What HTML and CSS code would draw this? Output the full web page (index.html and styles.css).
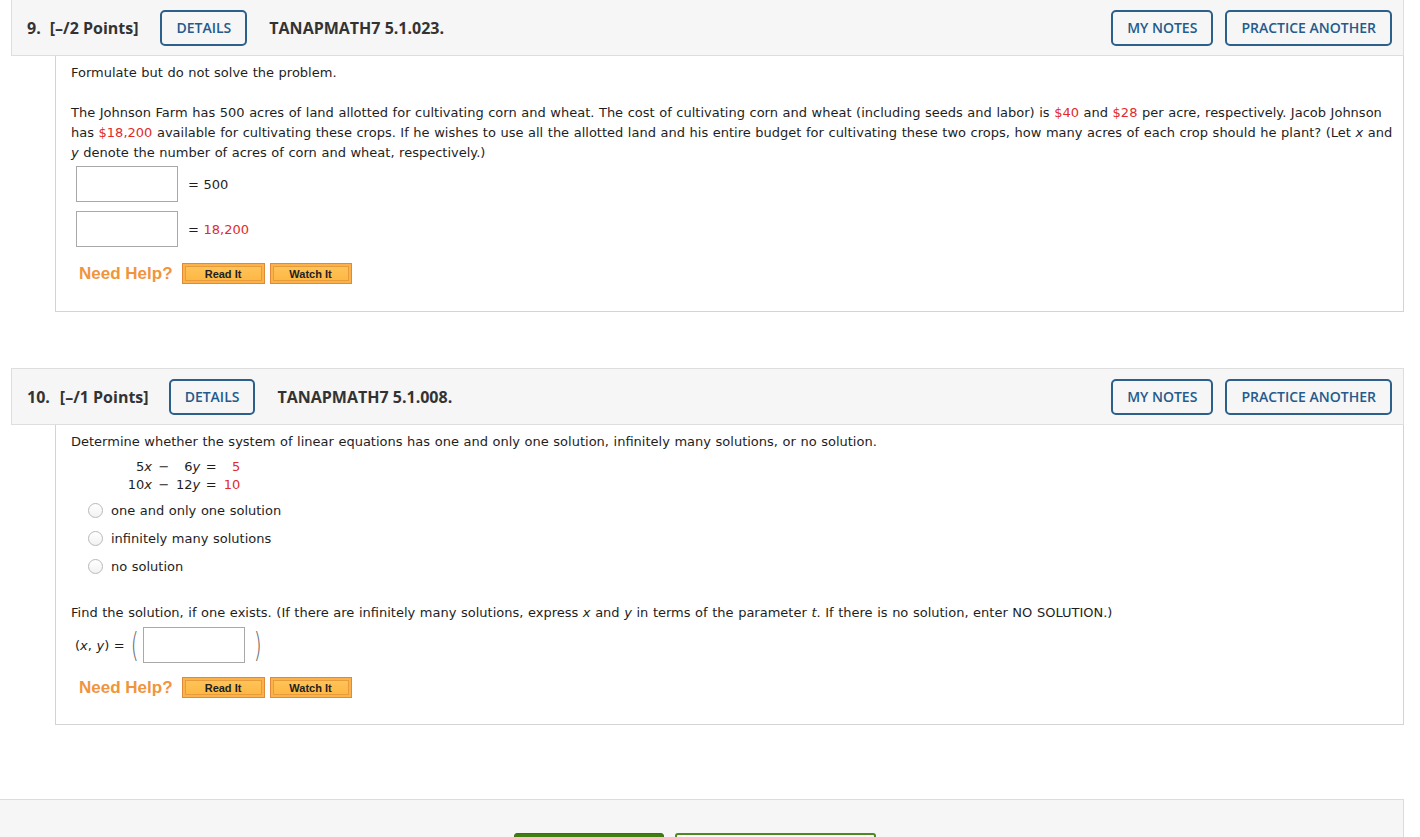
FILE: index.html
```html
<!DOCTYPE html>
<html>
<head>
<meta charset="utf-8">
<link rel="stylesheet" href="styles.css">
</head>
<body>
<div class="page">
  <div class="question q9">
    <div class="qhead">
      <span class="qnum">9.</span>
      <span class="qpts">[–/2 Points]</span>
      <span class="btn">DETAILS</span>
      <span class="qcode">TANAPMATH7 5.1.023.</span>
      <span class="spacer"></span>
      <span class="btn">MY NOTES</span>
      <span class="btn">PRACTICE ANOTHER</span>
    </div>
    <div class="qbody body9">
      <p class="line">Formulate but do not solve the problem.</p>
      <p class="para">The Johnson Farm has 500 acres of land allotted for cultivating corn and wheat. The cost of cultivating corn and wheat (including seeds and labor) is <span class="red">$40</span> and <span class="red">$28</span> per acre, respectively. Jacob Johnson has <span class="red">$18,200</span> available for cultivating these crops. If he wishes to use all the allotted land and his entire budget for cultivating these two crops, how many acres of each crop should he plant? (Let <i>x</i> and <i>y</i> denote the number of acres of corn and wheat, respectively.)</p>
      <div class="eqrow first"><span class="box"></span><span class="eqtxt">= 500</span></div>
      <div class="eqrow"><span class="box"></span><span class="eqtxt">= <span class="red">18,200</span></span></div>
      <div class="help">
        <span class="needhelp">Need Help?</span>
        <span class="hbtn">Read It</span>
        <span class="hbtn">Watch It</span>
      </div>
    </div>
  </div>

  <div class="question q10">
    <div class="qhead">
      <span class="qnum">10.</span>
      <span class="qpts">[–/1 Points]</span>
      <span class="btn">DETAILS</span>
      <span class="qcode">TANAPMATH7 5.1.008.</span>
      <span class="spacer"></span>
      <span class="btn">MY NOTES</span>
      <span class="btn">PRACTICE ANOTHER</span>
    </div>
    <div class="qbody body10">
      <p class="line">Determine whether the system of linear equations has one and only one solution, infinitely many solutions, or no solution.</p>
      <table class="sys">
        <tr><td class="r">5<i>x</i></td><td class="op">−</td><td class="r">6<i>y</i></td><td class="op">=</td><td class="r red">5</td></tr>
        <tr><td class="r">10<i>x</i></td><td class="op">−</td><td class="r">12<i>y</i></td><td class="op">=</td><td class="r red">10</td></tr>
      </table>
      <div class="opts">
        <div class="opt"><span class="radio"></span><span>one and only one solution</span></div>
        <div class="opt"><span class="radio"></span><span>infinitely many solutions</span></div>
        <div class="opt"><span class="radio"></span><span>no solution</span></div>
      </div>
      <p class="line find">Find the solution, if one exists. (If there are infinitely many solutions, express <i>x</i> and <i>y</i> in terms of the parameter <i>t</i>. If there is no solution, enter NO SOLUTION.)</p>
      <div class="xyrow">
        <span class="xy">(<i>x</i>, <i>y</i>) =</span>
        <span class="paren">(</span>
        <span class="box"></span>
        <span class="paren">)</span>
      </div>
      <div class="help help2">
        <span class="needhelp">Need Help?</span>
        <span class="hbtn">Read It</span>
        <span class="hbtn">Watch It</span>
      </div>
    </div>
  </div>

  <div class="footer">
    <span class="gbtn solid"></span>
    <span class="gbtn outline"></span>
  </div>
</div>
</body>
</html>
```
FILE: styles.css
```css
* { box-sizing: border-box; }
html, body { margin: 0; padding: 0; background: #fff; }
body {
  width: 1420px;
  height: 837px;
  overflow: hidden;
  font-family: "DejaVu Sans", Verdana, sans-serif;
  font-size: 13px;
  word-spacing: 0.45px;
  color: #1e1e1e;
}
.question { margin-left: 11px; width: 1393px; }
.q9 { margin-top: -1px; }
.q10 { margin-top: 56px; }
.qhead {
  height: 57px;
  background: #f6f6f6;
  border: 1px solid #dedede;
  display: flex;
  align-items: center;
  padding: 0 11px 0 15px;
  font-family: "Open Sans", sans-serif;
  word-spacing: 0;
  color: #333;
}
.qnum { font-size: 16px; font-weight: 700; margin-right: 9px; }
.q10 .qnum { margin-right: 10px; }
.qpts { font-size: 16px; font-weight: 700; margin-right: 22px; }
.q10 .qpts { margin-right: 20px; }
.qcode { font-size: 16px; font-weight: 700; margin-left: 22px; }
.spacer { flex: 1; }
.btn {
  height: 36px;
  border: 2px solid #2d5f8b;
  border-radius: 5px;
  color: #245a8c;
  font-size: 14px;
  font-weight: 600;
  display: flex;
  align-items: center;
  padding: 0 14px;
  margin-left: 12px;
}
.qhead .btn:nth-child(3) { margin-left: 0; }
.qbody {
  margin-left: 44px;
  border: 1px solid #d4d4d4;
  border-top: none;
  background: #fff;
  padding: 7px 10px 0 15px;
}
.body9 { height: 256px; }
.body10 { height: 300px; }
p { margin: 0; }
.line { line-height: 20px; }
.para { margin-top: 20px; line-height: 20px; }
.red { color: #e02b2b; }
.eqrow { display: flex; align-items: center; margin-left: 5px; margin-top: 9px; }
.eqrow.first { margin-top: 3px; }
.box {
  display: inline-block;
  width: 102px;
  height: 36px;
  border: 1px solid #a9a9a9;
  background: #fff;
}
.eqtxt { margin-left: 10px; }
.help { display: flex; align-items: center; margin-left: 8px; margin-top: 16px; }
.needhelp {
  font-family: "Liberation Sans", Arial, sans-serif;
  font-weight: 700;
  font-size: 17px;
  color: #f0953d;
  margin-right: 9px;
  word-spacing: 0;
}
.hbtn {
  width: 83px;
  height: 21px;
  margin-right: 5px;
  border: 1px solid #e08a36;
  background: linear-gradient(#ffc65c, #fdb540);
  box-shadow: inset 0 0 0 2px #fbb24a, inset 0 0 0 3px #e99a3a;
  font-family: "Liberation Sans", Arial, sans-serif;
  font-weight: 700;
  font-size: 11px;
  word-spacing: 0;
  color: #222;
  display: flex;
  align-items: center;
  justify-content: center;
}
.hbtn + .hbtn { width: 82px; }
.sys { border-collapse: collapse; margin-left: 51px; margin-top: 6px; }
.sys td { padding: 0; height: 18px; line-height: 18px; }
.sys td.r { text-align: right; }
.sys tr td:nth-child(1) { width: 30px; }
.sys tr td:nth-child(2) { width: 24px; text-align: center; }
.sys tr td:nth-child(3) { width: 24px; }
.sys tr td:nth-child(4) { width: 22px; text-align: center; }
.sys tr td:nth-child(5) { width: 18px; }
.opts { margin-top: 2px; }
.opt { display: flex; align-items: center; height: 28px; margin-left: 17px; }
.radio {
  width: 15px; height: 15px;
  border: 1px solid #b9b9b9;
  border-radius: 50%;
  background: linear-gradient(#fff, #f2f2f2);
  margin-right: 8px;
}
.find { margin-top: 23px; }
.xyrow { display: flex; align-items: center; margin-left: 4px; margin-top: 3px; height: 38px; }
.xy { margin-right: 3px; }
.paren { font-size: 34px; font-weight: 200; color: #666; line-height: 38px; font-family: "DejaVu Sans", sans-serif; transform: scaleX(0.6); display: inline-block; }
.xyrow .box { width: 102px; height: 36px; margin: 0 6px 0 2px; }
.help2 { margin-top: 13px; }
.footer {
  margin-top: 74px;
  width: 1404px;
  height: 60px;
  background: #f6f6f6;
  border-top: 1px solid #dcdcdc;
  border-right: 1px solid #dcdcdc;
  padding-left: 514px;
  padding-top: 33px;
  display: flex;
  gap: 11px;
}
.gbtn { height: 30px; border-radius: 3px; }
.gbtn.solid { width: 150px; background: #3f7f10; border: 1px solid #3a7010; }
.gbtn.outline { width: 201px; background: #fff; border: 2px solid #4a8a20; }
```
